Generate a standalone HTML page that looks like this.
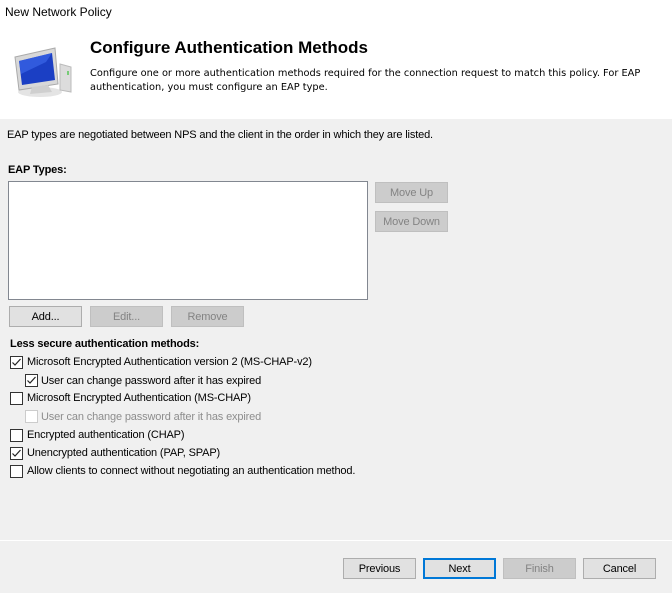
<!DOCTYPE html>
<html><head><style>
*{margin:0;padding:0;box-sizing:border-box}
body{width:672px;height:593px;position:relative;background:#f0f0f0;font-family:"Liberation Sans",sans-serif;font-size:11px;letter-spacing:-0.15px;color:#000;overflow:hidden}
.a{position:absolute;white-space:nowrap}
.hdr{position:absolute;left:0;top:0;width:672px;height:119px;background:#fff}
.btn{position:absolute;height:21px;width:73px;background:#e1e1e1;border:1px solid #adadad;text-align:center;line-height:20px;font-size:11px}
.dis{background:#cccccc;border-color:#bfbfbf;color:#838383}
.cb{position:absolute;width:13px;height:13px;border:1px solid #333;background:#fff}
.cb.d{border-color:#ccc}
.cb svg{position:absolute;left:0px;top:0px}
</style></head><body>
<div class="hdr"></div>
<div class="a" style="left:5px;top:5px;font-size:12px;letter-spacing:0">New Network Policy</div>
<svg class="a" style="left:10px;top:40px" width="65" height="60" viewBox="0 0 65 60">
<ellipse cx="30" cy="52" rx="22" ry="5" fill="#e4e4e4"/>
<path d="M50 24 L61 27 L61 52 L50 50 Z" fill="#dcdcdc" stroke="#bbb"/>
<rect x="57" y="31" width="2" height="4" fill="#7c7"/>
<path d="M5 17 L45 8 L48 44 L9 50 Z" fill="#d8d8d8" stroke="#aaa"/>
<path d="M9 21 L42 13 L45 40 L12 45 Z" fill="#1b3fc4"/>
<path d="M9 21 L42 13 L36 22 L11 34 Z" fill="#3a66e8" opacity=".7"/>
<path d="M22 47 L38 45 L42 52 L20 54 Z" fill="#cfcfcf"/>
</svg>
<div class="a" style="left:90px;top:38px;font-size:17px;font-weight:bold;letter-spacing:0">Configure Authentication Methods</div>
<div class="a" style="left:90px;top:67px;font-family:'DejaVu Sans',sans-serif;font-size:9.8px;letter-spacing:0;line-height:14px">Configure one or more authentication methods required for the connection request to match this policy. For EAP<br>authentication, you must configure an EAP type.</div>
<div class="a" style="left:7px;top:129px">EAP types are negotiated between NPS and the client in the order in which they are listed.</div>
<div class="a" style="left:8px;top:164px;font-weight:bold">EAP Types:</div>
<div class="a" style="left:8px;top:181px;width:360px;height:119px;background:#fff;border:1px solid #828790"></div>
<div class="btn dis" style="left:375px;top:182px">Move Up</div>
<div class="btn dis" style="left:375px;top:211px">Move Down</div>
<div class="btn" style="left:9px;top:306px">Add...</div>
<div class="btn dis" style="left:90px;top:306px">Edit...</div>
<div class="btn dis" style="left:171px;top:306px">Remove</div>
<div class="a" style="left:10px;top:338px;font-weight:bold">Less secure authentication methods:</div>
<div class="cb" style="left:10px;top:356px"><svg width="11" height="11"><path d="M1.5 5.5 L4 8 L9.5 2" stroke="#222" stroke-width="1.2" fill="none"/></svg></div>
<div class="a" style="left:27px;top:356px">Microsoft Encrypted Authentication version 2 (MS-CHAP-v2)</div>
<div class="cb" style="left:25px;top:374px"><svg width="11" height="11"><path d="M1.5 5.5 L4 8 L9.5 2" stroke="#222" stroke-width="1.2" fill="none"/></svg></div>
<div class="a" style="left:41px;top:375px">User can change password after it has expired</div>
<div class="cb" style="left:10px;top:392px"></div>
<div class="a" style="left:27px;top:392px">Microsoft Encrypted Authentication (MS-CHAP)</div>
<div class="cb d" style="left:25px;top:410px"></div>
<div class="a" style="left:41px;top:411px;color:#8d8d8d">User can change password after it has expired</div>
<div class="cb" style="left:10px;top:429px"></div>
<div class="a" style="left:27px;top:429px">Encrypted authentication (CHAP)</div>
<div class="cb" style="left:10px;top:447px"><svg width="11" height="11"><path d="M1.5 5.5 L4 8 L9.5 2" stroke="#222" stroke-width="1.2" fill="none"/></svg></div>
<div class="a" style="left:27px;top:447px">Unencrypted authentication (PAP, SPAP)</div>
<div class="cb" style="left:10px;top:465px"></div>
<div class="a" style="left:27px;top:465px">Allow clients to connect without negotiating an authentication method.</div>
<div class="a" style="left:0;top:540px;width:672px;height:1px;background:#fff"></div>
<div class="btn" style="left:343px;top:558px">Previous</div>
<div class="btn" style="left:423px;top:558px;border:2px solid #0078d7;line-height:18px">Next</div>
<div class="btn dis" style="left:503px;top:558px">Finish</div>
<div class="btn" style="left:583px;top:558px">Cancel</div>
</body></html>
